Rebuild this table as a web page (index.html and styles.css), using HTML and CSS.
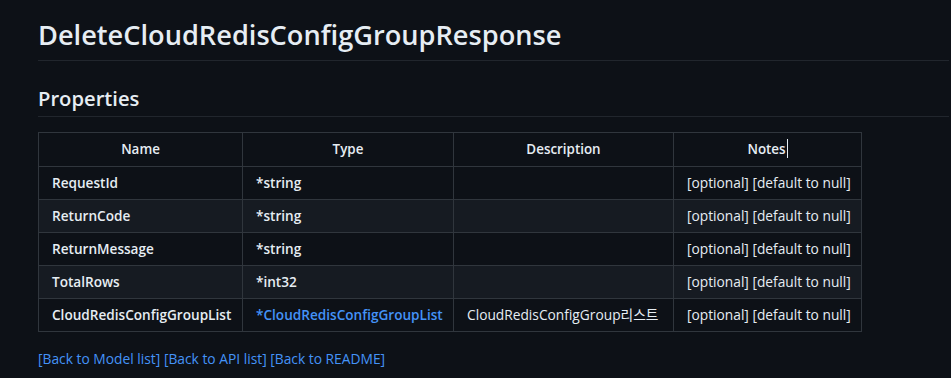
FILE: index.html
```html
<!DOCTYPE html>
<html lang="en">
<head>
<meta charset="utf-8">
<title>DeleteCloudRedisConfigGroupResponse</title>
<link rel="stylesheet" href="styles.css">
</head>
<body>
<div class="markdown-body">
  <h1 class="title">DeleteCloudRedisConfigGroupResponse</h1>
  <h2 class="section">Properties</h2>
  <table class="props">
    <colgroup>
      <col class="c-name">
      <col class="c-type">
      <col class="c-desc">
      <col class="c-notes">
    </colgroup>
    <thead>
      <tr>
        <th>Name</th>
        <th>Type</th>
        <th>Description</th>
        <th>Notes<span class="caret"></span></th>
      </tr>
    </thead>
    <tbody>
      <tr>
        <td class="name">RequestId</td>
        <td class="type">*string</td>
        <td></td>
        <td>[optional] [default to null]</td>
      </tr>
      <tr>
        <td class="name">ReturnCode</td>
        <td class="type">*string</td>
        <td></td>
        <td>[optional] [default to null]</td>
      </tr>
      <tr>
        <td class="name">ReturnMessage</td>
        <td class="type">*string</td>
        <td></td>
        <td>[optional] [default to null]</td>
      </tr>
      <tr>
        <td class="name">TotalRows</td>
        <td class="type">*int32</td>
        <td></td>
        <td>[optional] [default to null]</td>
      </tr>
      <tr>
        <td class="name">CloudRedisConfigGroupList</td>
        <td class="type"><a href="#">*CloudRedisConfigGroupList</a></td>
        <td>CloudRedisConfigGroup리스트</td>
        <td>[optional] [default to null]</td>
      </tr>
    </tbody>
  </table>
  <p class="nav"><a href="#">[Back to Model list]</a> <a href="#">[Back to API list]</a> <a href="#">[Back to README]</a></p>
</div>
</body>
</html>
```

FILE: styles.css
```css
html, body {
  margin: 0;
  padding: 0;
  background: #0d1117;
}

.markdown-body {
  padding: 17px 2px 0 38px;
  color: #e6edf3;
  font-family: "Open Sans", "Noto Sans", "Noto Sans CJK KR", sans-serif;
  font-size: 14px;
  line-height: 21px;
}

.title {
  margin: 0;
  padding-bottom: 8px;
  font-size: 27.2px;
  line-height: 35px;
  font-weight: 600;
  border-bottom: 1px solid #21262d;
}

.section {
  margin: 24px 0 0;
  padding-bottom: 5px;
  font-size: 20.2px;
  line-height: 26px;
  font-weight: 600;
  border-bottom: 1px solid #21262d;
}

.props {
  margin-top: 15px;
  border-collapse: collapse;
  border-spacing: 0;
  table-layout: fixed;
  width: 823px;
}

.c-name { width: 204px; }
.c-type { width: 211px; }
.c-desc { width: 220px; }
.c-notes { width: 188px; }

.props th,
.props td {
  border: 1px solid #30363d;
  padding: 6px 13px;
  white-space: nowrap;
  overflow: visible;
}

.props th {
  font-size: 13.4px;
  font-weight: 600;
  text-align: center;
  line-height: 21px;
}

.props td {
  font-size: 13.75px;
  line-height: 20px;
  text-align: left;
}

.props td.name,
.props td.type {
  font-size: 13.6px;
  font-weight: 600;
}

.props tbody tr {
  background: #0d1117;
}

.props tbody tr:nth-child(2n) {
  background: #161b22;
}

.caret {
  display: inline-block;
  width: 1px;
  height: 19px;
  margin-left: 1px;
  background: #e6edf3;
  vertical-align: -4px;
}

a {
  color: #4493f8;
  text-decoration: none;
}

.nav {
  margin: 16px 0 0;
  font-size: 13.8px;
}
```
